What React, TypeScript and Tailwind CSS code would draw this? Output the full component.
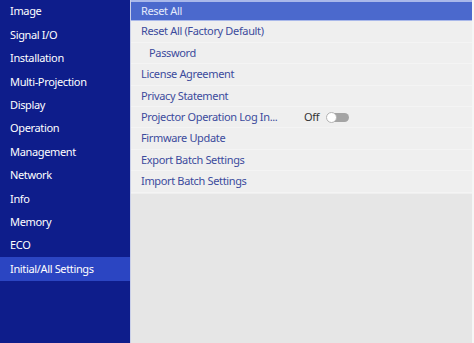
const menu = [
  'Image',
  'Signal I/O',
  'Installation',
  'Multi-Projection',
  'Display',
  'Operation',
  'Management',
  'Network',
  'Info',
  'Memory',
  'ECO',
  'Initial/All Settings',
];

const options = [
  { label: 'Reset All', active: true },
  { label: 'Reset All (Factory Default)' },
  { label: 'Password', indent: true },
  { label: 'License Agreement' },
  { label: 'Privacy Statement' },
  { label: 'Projector Operation Log In...', toggle: true },
  { label: 'Firmware Update' },
  { label: 'Export Batch Settings' },
  { label: 'Import Batch Settings' },
];

function Toggle() {
  return (
    <div className="relative w-[22px] h-[9px] rounded-full bg-[#a4a4a4]">
      <div className="absolute left-[-1px] top-[-1px] w-[11px] h-[11px] rounded-full bg-white border border-[#b4b4b4]" />
    </div>
  );
}

export default function App() {
  return (
    <div
      className="flex w-[474px] h-[343px] overflow-hidden text-[11px] tracking-[-0.35px]"
      style={{ fontFamily: '"Noto Sans", "Open Sans", sans-serif' }}
    >
      {/* Sidebar */}
      <div className="w-[130px] shrink-0 bg-[#0e1d8b] flex flex-col">
        {menu.map((m) => (
          <div
            key={m}
            className={`h-[23.4px] flex items-center pl-[10px] text-white ${
              m === 'Initial/All Settings' ? 'bg-[#2b45c2]' : ''
            }`}
          >
            {m}
          </div>
        ))}
      </div>

      {/* Content */}
      <div className="flex-1 flex border-l border-[#c9cfe9] bg-[#e6e6e6]">
        <div className="flex-1 flex flex-col">
          <div className="bg-[#efefef] flex flex-col pb-[1px]">
            {options.map((o) => (
              <div
                key={o.label}
                className={`h-[21.4px] flex items-center ${o.indent ? 'pl-[18px]' : 'pl-[10px]'} ${
                  o.active
                    ? 'bg-[#4b69cd] text-[#e4e9fb] border-t-2 border-b border-[#a9b8ea]'
                    : 'text-[#3c4b9d] border-b border-[#f4f4f4]'
                }`}
              >
                <span className={o.toggle ? 'w-[163px] shrink-0' : ''}>{o.label}</span>
                {o.toggle && (
                  <div className="flex items-center gap-[8px]">
                    <span className="text-[#333333]">Off</span>
                    <Toggle />
                  </div>
                )}
              </div>
            ))}
          </div>
        </div>
        <div className="w-[2px] bg-[#f6f6f6]" />
      </div>
    </div>
  );
}
